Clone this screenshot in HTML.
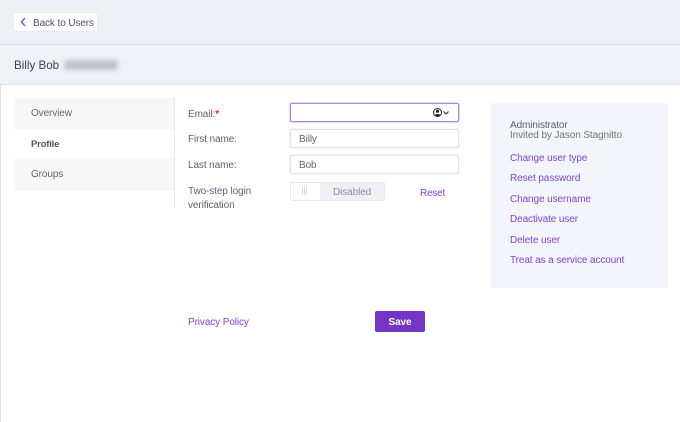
<!DOCTYPE html>
<html>
<head>
<meta charset="utf-8">
<style>
html,body{margin:0;padding:0;background:#fff}
body{width:680px;height:422px;position:relative;overflow:hidden;font-family:"Liberation Sans",sans-serif;color:#4a5361}
#w{left:0;top:0;width:680px;height:422px;background:#fff;overflow:hidden;filter:blur(.35px)}
div,a,span{position:absolute;white-space:nowrap}
.t{font-size:10px;letter-spacing:-.1px;line-height:16px;margin-top:1px}
.lnk{color:#8343d8;font-size:10px;letter-spacing:-.1px;line-height:16px;left:510px;margin-top:1px}
.lbl{left:188px;color:#5a6270}
.inp{left:290px;width:167px;height:17px;background:#fff;border:1px solid #e0e2e6;box-shadow:0 0 0 .5px #eceef0;border-radius:2px}
.val{left:299px;color:#666}
</style>
</head>
<body>
<div id="w">
<div style="left:0;top:0;width:680px;height:44px;background:#edf0f5"></div>
<div style="left:0;top:44px;width:680px;height:1px;background:#dde1e8"></div>
<div style="left:0;top:45px;width:680px;height:39px;background:#eff2f6"></div>
<div style="left:0;top:84px;width:680px;height:1px;background:#dde1e8"></div>
<div style="left:0;top:85px;width:1px;height:337px;background:#dfe3f0"></div>

<div style="left:14px;top:13px;width:83px;height:18px;background:#fff;border-radius:2px;box-shadow:0 0 1px #d5d9e0"></div>
<svg style="position:absolute;left:19px;top:17px" width="8" height="10" viewBox="0 0 8 10"><path d="M6 1L2.5 5L6 9" fill="none" stroke="#7c3bd6" stroke-width="1.3"/></svg>
<div class="t" style="left:33px;top:15px;color:#4a5565">Back to Users</div>

<div style="left:14px;top:58px;font-size:11.6px;line-height:16px;color:#36425a">Billy Bob</div>
<div style="left:64px;top:60px;width:54px;height:10px;background:#bcc2cd;border-radius:4px;filter:blur(2.5px)"></div>

<div style="left:14px;top:98px;width:161px;height:31px;background:#f7f7f7"></div>
<div style="left:14px;top:158px;width:161px;height:32px;background:#f7f7f7;border-bottom:1px solid #f1f1f1;box-sizing:border-box"></div>
<div style="left:174px;top:98px;width:1px;height:110px;background:#e9e9e9"></div>
<div class="t" style="left:31px;top:105px;color:#666">Overview</div>
<div class="t" style="left:31px;top:136px;color:#555;font-weight:bold;font-size:9.5px;letter-spacing:-.2px">Profile</div>
<div class="t" style="left:31px;top:166px;color:#666">Groups</div>

<div class="t lbl" style="top:106px">Email:<span style="position:static;color:#e8212b;font-weight:bold">*</span></div>
<div class="t lbl" style="top:131px">First name:</div>
<div class="t lbl" style="top:157px">Last name:</div>
<div class="t lbl" style="top:183px">Two-step login</div>
<div class="t lbl" style="top:197px">verification</div>

<div style="left:290px;top:103px;width:167px;height:17px;background:#fff;border:1px solid #ad86e4;box-shadow:0 0 0 .5px #c7adee;border-radius:2px"></div>
<svg style="position:absolute;left:432px;top:107px" width="20" height="12" viewBox="0 0 20 12"><circle cx="5.5" cy="5.5" r="4" fill="none" stroke="#222" stroke-width="1"/><circle cx="5.5" cy="4.3" r="1.6" fill="#222"/><path d="M2.8 8.2C3.5 6.6 7.5 6.6 8.2 8.2L5.5 9.5Z" fill="#222"/><path d="M11.5 4.5L14 7l2.5-2.5" fill="none" stroke="#333" stroke-width="1.1"/></svg>

<div class="inp" style="top:129px"></div>
<div class="t val" style="top:131px">Billy</div>
<div class="inp" style="top:155px"></div>
<div class="t val" style="top:157px">Bob</div>

<div style="left:290px;top:182px;width:93px;height:17px;background:#fff;border:1px solid #e6e8ec;border-radius:2px"></div>
<div style="left:320px;top:183px;width:64px;height:17px;background:#edf0f4"></div>
<div style="left:302px;top:187px;width:1px;height:8px;background:#d9d9d9"></div>
<div style="left:304px;top:187px;width:1px;height:8px;background:#d9d9d9"></div>
<div style="left:306px;top:187px;width:1px;height:8px;background:#d9d9d9"></div>
<div class="t" style="left:333px;top:184px;color:#8b919b">Disabled</div>
<div class="t" style="left:420px;top:185px;color:#8343d8;letter-spacing:-.2px">Reset</div>

<div style="left:491px;top:103px;width:177px;height:185px;background:#f2f5fa;border-radius:2px"></div>
<div class="t" style="left:510px;top:117px;color:#5a6270">Administrator</div>
<div class="t" style="left:510px;top:127px;color:#70767f">Invited by Jason Stagnitto</div>
<a class="lnk" style="top:150px">Change user type</a>
<a class="lnk" style="top:170px">Reset password</a>
<a class="lnk" style="top:191px">Change username</a>
<a class="lnk" style="top:211px">Deactivate user</a>
<a class="lnk" style="top:232px">Delete user</a>
<a class="lnk" style="top:252px">Treat as a service account</a>

<a class="lnk" style="left:188px;top:314px">Privacy Policy</a>
<div style="left:375px;top:311px;width:50px;height:21px;background:#7434c4;border-radius:2px"></div>
<div style="left:375px;top:312px;width:50px;height:21px;line-height:21px;text-align:center;color:#fff;font-size:10px;letter-spacing:-.1px;font-weight:bold">Save</div>
</div>
</body>
</html>
